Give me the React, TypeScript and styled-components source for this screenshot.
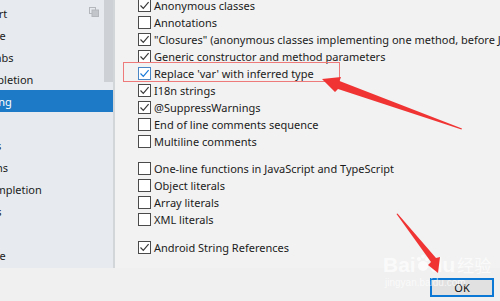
import React from "react";
import styled, { createGlobalStyle } from "styled-components";

const Global = createGlobalStyle`
  html, body { margin: 0; padding: 0; background: #f0f0f0; }
  body { font-family: "Noto Sans", "Liberation Sans", sans-serif; }
  * { box-sizing: border-box; }
`;

const Page = styled.div`
  position: relative;
  width: 500px;
  height: 301px;
  overflow: hidden;
  display: flex;
  flex-direction: column;
  background: #f0f0f0;
`;

const Main = styled.div`
  display: flex;
  height: 268px;
`;

const Sidebar = styled.div`
  position: relative;
  width: 113px;
  flex: none;
  background: #e7ebef;
  overflow: hidden;
  padding-top: 2px;
`;

const ScrollThumb = styled.div`
  position: absolute;
  right: 0;
  top: 0;
  width: 9px;
  height: 82px;
  background: #cdd1d5;
`;

const CopyIcon = styled.svg`
  position: absolute;
  left: 89px;
  top: 7px;
`;

const TreeRow = styled.div<{ $selected?: boolean }>`
  position: relative;
  height: 22px;
  display: flex;
  align-items: center;
  background: ${(p) => (p.$selected ? "#1d7ac7" : "transparent")};
  color: ${(p) => (p.$selected ? "#ffffff" : "#1b1b1b")};
  font-size: 11px;
  white-space: nowrap;
  z-index: ${(p) => (p.$selected ? 1 : 0)};
`;

const TreeLabel = styled.span`
  margin-left: -56px;
`;

const Divider = styled.div`
  width: 2px;
  flex: none;
  background: #d3d6d9;
`;

const Content = styled.div`
  flex: 1;
  background: #f2f2f2;
  padding-left: 23px;
  overflow: hidden;
`;

const List = styled.div`
  margin-top: -3px;
  display: flex;
  flex-direction: column;
`;

const Group = styled.div<{ $gap?: number }>`
  display: flex;
  flex-direction: column;
  margin-top: ${(p) => p.$gap ?? 0}px;
`;

const Row = styled.div`
  height: 17px;
  display: flex;
  align-items: center;
  gap: 3px;
  white-space: nowrap;
  font-size: 11px;
  color: #1b1b1b;
`;

const Box = styled.span<{ $focus?: boolean }>`
  width: 13px;
  height: 13px;
  flex: none;
  border: 1px solid ${(p) => (p.$focus ? "#4a86c5" : "#4a4a4a")};
  background: #ffffff;
  display: flex;
  align-items: center;
  justify-content: center;
`;

const Footer = styled.div`
  flex: 1;
  display: flex;
  justify-content: flex-end;
  align-items: flex-start;
  padding: 10px 6px 0 0;
`;

const OkButton = styled.button`
  width: 64px;
  height: 19px;
  border: 2px solid #0a78d4;
  background: #e1e1e1;
  font-family: "Noto Sans", "Liberation Sans", sans-serif;
  font-size: 11px;
  color: #111;
  padding: 0;
  display: flex;
  align-items: center;
  justify-content: center;
`;

const Highlight = styled.div`
  position: absolute;
  left: 123px;
  top: 62px;
  width: 217px;
  height: 20px;
  border: 1.5px solid #ef7a7a;
  pointer-events: none;
`;

const Overlay = styled.svg`
  position: absolute;
  left: 0;
  top: 0;
  pointer-events: none;
`;

const Watermark = styled.div`
  position: absolute;
  left: 383px;
  top: 254px;
  color: rgba(255, 255, 255, 0.7);
  pointer-events: none;
  display: flex;
  flex-direction: column;
  line-height: 1;
`;

const WmTop = styled.div`
  display: flex;
  align-items: baseline;
  font-family: "Liberation Sans", sans-serif;
  font-weight: bold;
  font-size: 21px;
`;

const WmCn = styled.span`
  font-family: "Noto Sans CJK SC", sans-serif;
  font-weight: normal;
  font-size: 17px;
  margin-left: 2px;
`;

const WmSub = styled.div`
  font-family: "Liberation Sans", sans-serif;
  font-size: 10px;
  margin-top: 3px;
  margin-left: 2px;
`;

const Check = ({ color }: { color: string }) => (
  <svg width="11" height="11" viewBox="0 0 11 11">
    <path d="M1.5 5.5 L4.3 8.3 L9.6 2.2" fill="none" stroke={color} strokeWidth="1.2" />
  </svg>
);

const tree = [
  "Auto Import",
  "Appearance",
  "Breadcrumbs",
  "Code Completion",
  "Code Folding",
  "Console",
  "Editor Tabs",
  "Gutter Icons",
  "Postfix Completion",
  "Smart Keys",
  "Font",
  "Appearance",
];

type Item = { label: string; checked: boolean; focus?: boolean };

const groups: { gap: number; items: Item[] }[] = [
  {
    gap: 0,
    items: [
      { label: "Anonymous classes", checked: true },
      { label: "Annotations", checked: false },
      { label: "\"Closures\" (anonymous classes implementing one method, before Java 8)", checked: true },
      { label: "Generic constructor and method parameters", checked: true },
      { label: "Replace 'var' with inferred type", checked: true, focus: true },
      { label: "I18n strings", checked: true },
      { label: "@SuppressWarnings", checked: true },
      { label: "End of line comments sequence", checked: false },
      { label: "Multiline comments", checked: false },
    ],
  },
  {
    gap: 10,
    items: [
      { label: "One-line functions in JavaScript and TypeScript", checked: false },
      { label: "Object literals", checked: false },
      { label: "Array literals", checked: false },
      { label: "XML literals", checked: false },
    ],
  },
  {
    gap: 11,
    items: [{ label: "Android String References", checked: true }],
  },
];

export default function App() {
  return (
    <Page>
      <Global />
      <Main>
        <Sidebar>
          <ScrollThumb />
          <CopyIcon width="10" height="10" viewBox="0 0 10 10">
            <rect x="0.5" y="0.5" width="6" height="6" fill="none" stroke="#b4b8bc" />
            <rect x="3" y="3" width="6.5" height="6.5" fill="#c2c6ca" stroke="#b4b8bc" />
          </CopyIcon>
          {tree.map((t, i) => (
            <TreeRow key={i} $selected={i === 4}>
              <TreeLabel>{t}</TreeLabel>
            </TreeRow>
          ))}
        </Sidebar>
        <Divider />
        <Content>
          <List>
            {groups.map((g, gi) => (
              <Group key={gi} $gap={g.gap}>
                {g.items.map((it, i) => (
                  <Row key={i}>
                    <Box $focus={it.focus}>
                      {it.checked && <Check color={it.focus ? "#1a7ad8" : "#3a3a3a"} />}
                    </Box>
                    <span>{it.label}</span>
                  </Row>
                ))}
              </Group>
            ))}
          </List>
        </Content>
      </Main>
      <Footer>
        <OkButton>OK</OkButton>
      </Footer>
      <Highlight />
      <Watermark>
        <WmTop>
          Bai
          <svg width="14" height="18" viewBox="0 0 14 18">
            <circle cx="3" cy="5" r="2" fill="rgba(255,255,255,0.7)" />
            <circle cx="7" cy="2.5" r="2" fill="rgba(255,255,255,0.7)" />
            <circle cx="11" cy="5" r="2" fill="rgba(255,255,255,0.7)" />
            <ellipse cx="7" cy="12" rx="5" ry="5" fill="rgba(255,255,255,0.7)" />
          </svg>
          du
          <WmCn>经验</WmCn>
        </WmTop>
        <WmSub>jingyan.baidu.com</WmSub>
      </Watermark>
      <Overlay width="500" height="301" viewBox="0 0 500 301">
        <polygon
          points="322,79 341,77 339.5,81 462,128.5 461.5,129.5 338,89 335,92"
          fill="#f03434"
        />
        <polygon
          points="438,273 440,257 436,258 397.5,213.5 396.5,214 431,262 428,265"
          fill="#f03434"
        />
      </Overlay>
    </Page>
  );
}
